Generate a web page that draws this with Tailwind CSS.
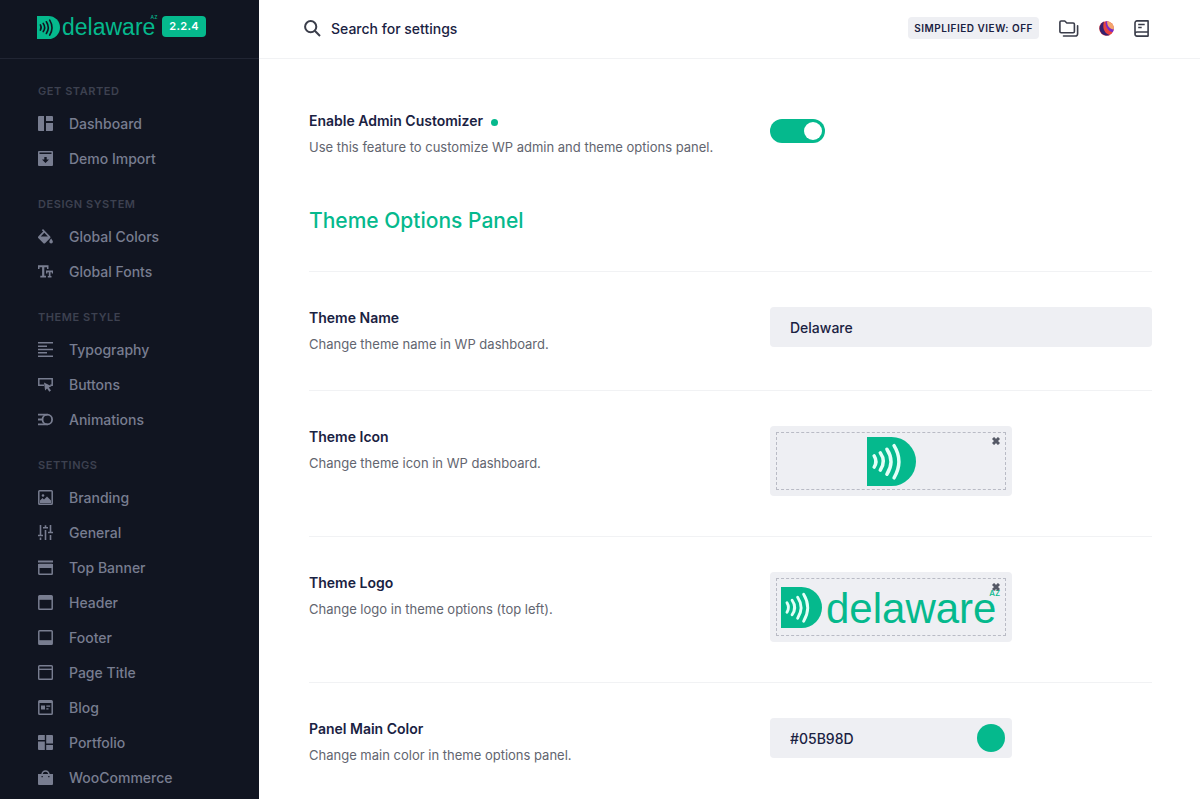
<!DOCTYPE html>
<html lang="en">
<head>
    <meta charset="UTF-8">
    <meta name="viewport" content="width=device-width, initial-scale=1.0">
    <title>Delaware - Theme Options</title>
    <script src="https://cdn.jsdelivr.net/npm/@tailwindcss/browser@4"></script>
</head>
<body class="bg-white font-['Inter',sans-serif] text-[#1a2242]">
    <svg class="hidden">
        <symbol id="mark" viewBox="0 0 48 48">
            <path fill="#05b98d" d="M0 0h24a24 24 0 0 1 0 48H0z"/>
            <g fill="none" stroke="currentColor" stroke-width="3.400" stroke-linecap="round">
                <path d="M7 18.500q3.500 5.500 0 11"/>
                <path d="M13 15.500q6 8.500 0 17"/>
                <path d="M19.500 12q8 12 0 24.500"/>
                <path d="M26.500 8.500q9.500 15.500 0 31.500"/>
            </g>
        </symbol>
    </svg>

    <div class="flex min-h-screen">
        <aside class="w-[259px] shrink-0 bg-[#111521]">
            <div class="flex h-[59px] items-start border-b border-[#212533] pl-[37px] pt-[15px]">
                <a href="#" class="relative flex items-center gap-[2px] text-[#05b98d]">
                    <svg class="size-[23px] text-[#111521]"><use href="#mark"/></svg>
                    <span class="font-['Liberation_Sans',sans-serif] text-[23px] leading-6">delaware</span>
                    <span class="absolute -right-[2px] -top-px text-[5px] font-medium leading-[6px]">AZ</span>
                </a>
                <span class="ml-[7px] mt-px rounded-[4px] bg-[#05b98d] px-[7px] text-[11px] font-semibold leading-[21px] tracking-wide text-white">2.2.4</span>
            </div>

            <nav class="pl-[38px] pt-[22px] text-[14px] font-medium text-[#787d90]">
                <h2 class="mb-[5px] text-[11px] font-semibold leading-5 tracking-wider text-[#3d4150]">GET STARTED</h2>
                <a href="#" class="flex h-[35px] items-center gap-4">
                    <svg class="size-[15px]" viewBox="0 0 15 15" fill="currentColor"><path d="M0 1a1 1 0 0 1 1-1h5v15H1a1 1 0 0 1-1-1zM8 0h6a1 1 0 0 1 1 1v4H8zM8 7h7v7a1 1 0 0 1-1 1H8z"/></svg>
                    Dashboard
                </a>
                <a href="#" class="flex h-[35px] items-center gap-4">
                    <svg class="size-[15px]" viewBox="0 0 15 15" fill="currentColor" fill-rule="evenodd"><path d="M1 0h13a1 1 0 0 1 1 1v13a1 1 0 0 1-1 1H1a1 1 0 0 1-1-1V1a1 1 0 0 1 1-1zM1.500 1.500V3h12V1.500zM6.300 6v2.500H4L7.500 12 11 8.500H8.700V6z"/></svg>
                    Demo Import
                </a>

                <h2 class="mb-[5px] mt-[18px] text-[11px] font-semibold leading-5 tracking-wider text-[#3d4150]">DESIGN SYSTEM</h2>
                <a href="#" class="flex h-[35px] items-center gap-4">
                    <svg class="size-[15px]" viewBox="0 0 15 15" fill="currentColor" fill-rule="evenodd"><path d="M5 0 3.800 1.200l1.300 1.300L.5 7.200a1.500 1.500 0 0 0 0 2.100l4.700 4.600a1.500 1.500 0 0 0 2.100 0L12 9.300a1.500 1.500 0 0 0 0-2.100zM6.300 3.800 9.900 7.500H2.700z"/><path d="M13.100 9.500s-1.800 2-1.800 3.200a1.800 1.800 0 0 0 3.600 0c0-1.200-1.800-3.200-1.800-3.200z"/></svg>
                    Global Colors
                </a>
                <a href="#" class="flex h-[35px] items-center gap-4">
                    <svg class="size-[15px]" viewBox="0 0 15 15" fill="currentColor"><path d="M0 1.200h10.500V5H9V3.200H6.300v8.600H8v1.600H2.300v-1.600h1.800V3.200H1.500V5H0zM8 6.500h7v3h-1.200V8.200h-1.300v3.900h1v1.300H9.800v-1.300h1V8.200H9.400v1.300H8z"/></svg>
                    Global Fonts
                </a>

                <h2 class="mb-[5px] mt-[18px] text-[11px] font-semibold leading-5 tracking-wider text-[#3d4150]">THEME STYLE</h2>
                <a href="#" class="flex h-[35px] items-center gap-4">
                    <svg class="size-[15px]" viewBox="0 0 15 15" fill="currentColor"><path d="M0 0h15v1.500H0zM0 3.400h9v1.500H0zM0 6.800h15v1.500H0zM0 10.100h9v1.500H0zM0 13.500h15V15H0z"/></svg>
                    Typography
                </a>
                <a href="#" class="flex h-[35px] items-center gap-4">
                    <svg class="size-[15px]" viewBox="0 0 15 15"><path fill="none" stroke="currentColor" stroke-width="1.500" d="M6 8.200H.8V1.800h13.400v6.400h-2"/><path fill="currentColor" d="m6 5.500 7.500 3.700-2.700 1.200 2.200 3-1.700 1.300-2.200-3.100-2 2z"/></svg>
                    Buttons
                </a>
                <a href="#" class="flex h-[35px] items-center gap-4">
                    <svg class="size-[15px]" viewBox="0 0 15 15" fill="none" stroke="currentColor" stroke-width="1.800"><circle cx="9.300" cy="7.500" r="4.800"/><path d="M0 2.700h9.500M0 7.500h4.800M0 12.300h9.500"/></svg>
                    Animations
                </a>

                <h2 class="mb-[5px] mt-[18px] text-[11px] font-semibold leading-5 tracking-wider text-[#3d4150]">SETTINGS</h2>
                <a href="#" class="flex h-[35px] items-center gap-4">
                    <svg class="size-[15px]" viewBox="0 0 15 15"><rect x=".8" y=".8" width="13.400" height="13.400" rx=".8" fill="none" stroke="currentColor" stroke-width="1.500"/><circle cx="5" cy="5.500" r="1.300" fill="currentColor"/><path fill="currentColor" d="M2 13v-2.500L4.500 8 6 9.500 9 6.500l4 4V13z"/></svg>
                    Branding
                </a>
                <a href="#" class="flex h-[35px] items-center gap-4">
                    <svg class="size-[15px]" viewBox="0 0 15 15" fill="none" stroke="currentColor" stroke-width="1.600"><path d="M2.500 0v10.500M0 10.500h5M2.500 12.500V15M7.500 5v10M5 2.800h5M7.500.3v2.500M12.500 0v7.200M10 7.500h5M12.500 10v5"/></svg>
                    General
                </a>
                <a href="#" class="flex h-[35px] items-center gap-4">
                    <svg class="size-[15px]" viewBox="0 0 15 15"><path fill="currentColor" d="M0 .5h15v2H0zM0 4h15v4H0z"/><rect x=".8" y="4.500" width="13.400" height="9.700" rx=".5" fill="none" stroke="currentColor" stroke-width="1.500"/></svg>
                    Top Banner
                </a>
                <a href="#" class="flex h-[35px] items-center gap-4">
                    <svg class="size-[15px]" viewBox="0 0 15 15"><rect x=".8" y=".8" width="13.400" height="13.400" rx=".8" fill="none" stroke="currentColor" stroke-width="1.500"/><path fill="currentColor" d="M1 1h13v3.800H1z"/></svg>
                    Header
                </a>
                <a href="#" class="flex h-[35px] items-center gap-4">
                    <svg class="size-[15px]" viewBox="0 0 15 15"><rect x=".8" y=".8" width="13.400" height="13.400" rx=".8" fill="none" stroke="currentColor" stroke-width="1.500"/><path fill="currentColor" d="M1 10.200h13V14H1z"/></svg>
                    Footer
                </a>
                <a href="#" class="flex h-[35px] items-center gap-4">
                    <svg class="size-[15px]" viewBox="0 0 15 15" fill="none" stroke="currentColor" stroke-width="1.400"><rect x=".7" y=".7" width="13.600" height="13.600" rx=".8"/><path d="M1 4.300h13"/></svg>
                    Page Title
                </a>
                <a href="#" class="flex h-[35px] items-center gap-4">
                    <svg class="size-[15px]" viewBox="0 0 15 15"><rect x=".8" y=".8" width="13.400" height="13.400" rx=".8" fill="none" stroke="currentColor" stroke-width="1.500"/><path fill="currentColor" d="M1 1h13v2H1zM3 5.500h4v4H3zM8.300 5.500h3.900v1.300H8.300zM8.300 8.200h2.200v1.300H8.300z"/></svg>
                    Blog
                </a>
                <a href="#" class="flex h-[35px] items-center gap-4">
                    <svg class="size-[15px]" viewBox="0 0 15 15" fill="currentColor"><path d="M1 0h5.800v5H0V1a1 1 0 0 1 1-1zM8.200 0H14a1 1 0 0 1 1 1v7.500H8.200zM0 6.500h6.800V15H1a1 1 0 0 1-1-1zM8.200 10H15v4a1 1 0 0 1-1 1H8.200z"/></svg>
                    Portfolio
                </a>
                <a href="#" class="flex h-[35px] items-center gap-4">
                    <svg class="size-[15px]" viewBox="0 0 15 15" fill="currentColor" fill-rule="evenodd"><path d="M0 4h15v10a1 1 0 0 1-1 1H1a1 1 0 0 1-1-1zM3.500 6v1.300h1.300V6zM10.200 6v1.300h1.300V6z"/><path fill="none" stroke="currentColor" stroke-width="1.500" d="M4 4.500a3.500 3.500 0 0 1 7 0"/></svg>
                    WooCommerce
                </a>
            </nav>
        </aside>

        <div class="min-w-0 flex-1">
            <header class="flex h-[59px] items-center border-b border-[#f1f2f4] pb-[2px] pl-[45px] pr-[51px] text-[#3a3d4a]">
                <label for="search" class="mr-[10px]">
                    <svg class="size-[17px]" viewBox="0 0 17 17" fill="none" stroke="currentColor" stroke-width="2"><circle cx="6.700" cy="6.700" r="5.600"/><path d="m10.800 10.800 5.200 5.200"/></svg>
                </label>
                <input id="search" type="text" placeholder="Search for settings" aria-label="Search for settings" class="min-w-0 flex-1 text-[14px] font-medium outline-none placeholder:text-[#1a2242]">
                <button class="mr-5 h-[22px] rounded-[4px] bg-[#eeeff3] px-[6px] text-[10px] font-semibold tracking-wider text-[#1a2242]">SIMPLIFIED VIEW: OFF</button>
                <a href="#" aria-label="Files" class="mr-5"><svg class="h-[17px] w-5" viewBox="0 0 20 17" fill="none" stroke="currentColor" stroke-width="1.600" stroke-linejoin="round" stroke-linecap="round"><path d="M.9 2.200Q.9 1 2.100 1h3.700l2 2h6.400q1.200 0 1.200 1.200v7.300q0 1.200-1.200 1.200H2.100Q.9 12.700.9 11.500z"/><path d="M4.500 16h11.800q2.300 0 2.300-2.300V5.800"/></svg></a>
                <a href="#" aria-label="Colors" class="mr-5"><svg class="size-[15px]" viewBox="0 0 15 15"><circle cx="7.500" cy="7.500" r="7.300" fill="#e8443f"/><path fill="#35206f" d="M5 .6a7.300 7.300 0 1 0 5.800 13.400C5.500 12.500 3 7 5 .6z"/><path fill="#7a2bc8" d="M6.700.2C6 5 9 10.500 13.800 11.300A7.300 7.300 0 0 0 14.800 7C11.500 6.500 9.500 4 9.200.4z"/><path fill="#f3a56c" d="M8 .2c0 4.800 2.800 8 6.800 8.300A7.300 7.300 0 0 0 8 .2z"/></svg></a>
                <a href="#" aria-label="Documentation"><svg class="h-[17px] w-[15px]" viewBox="0 0 15 17" fill="none" stroke="currentColor" stroke-width="1.600" stroke-linejoin="round"><path d="M3 .9h11.100v15.200H3a2 2 0 0 1-2-2V2.900a2 2 0 0 1 2-2zM1 14a2 2 0 0 1 2-2h11M4.200 4.500h6.500M4.200 7.500h3.500"/></svg></a>
            </header>

            <main class="pl-[50px] pr-12 pt-[51px]">
                <div class="grid grid-cols-[461fr_382fr]">
                    <div>
                        <label for="customizer" class="flex items-center text-[14px] font-semibold leading-[22px]">Enable Admin Customizer <span class="ml-2 mt-[2px] size-[7px] rounded-full bg-[#05b98d]"></span></label>
                        <p class="mt-[5px] text-[13px] leading-5 text-[#62656f]">Use this feature to customize WP admin and theme options panel.</p>
                    </div>
                    <div class="flex pt-[9px]">
                        <input id="customizer" type="checkbox" checked class="h-6 w-[55px] appearance-none rounded-full bg-gray-300 p-[3px] before:block before:size-[18px] before:rounded-full before:bg-white checked:bg-[#05b98d] checked:before:ml-auto">
                    </div>
                </div>

                <h1 class="mb-[35px] mt-[49px] text-[21px] font-medium leading-[30px] text-[#05b98d]">Theme Options Panel</h1>

                <div class="grid grid-cols-[461fr_382fr] border-t border-[#f1f2f4] pb-9 pt-[35px]">
                    <div>
                        <label for="name" class="block text-[14px] font-semibold leading-[22px]">Theme Name</label>
                        <p class="mt-[5px] text-[13px] leading-5 text-[#62656f]">Change theme name in WP dashboard.</p>
                    </div>
                    <input id="name" type="text" value="Delaware" class="h-10 w-full rounded-[4px] bg-[#eeeff3] px-5 text-[14px] font-medium outline-none">
                </div>

                <div class="grid grid-cols-[461fr_382fr] border-t border-[#f1f2f4] pb-10 pt-[35px]">
                    <div>
                        <h3 class="text-[14px] font-semibold leading-[22px]">Theme Icon</h3>
                        <p class="mt-[5px] text-[13px] leading-5 text-[#62656f]">Change theme icon in WP dashboard.</p>
                    </div>
                    <div class="h-[70px] w-[242px] rounded-[4px] bg-[#eeeff3] p-[6px]">
                        <div class="relative flex h-full items-center justify-center border border-dashed border-[#b9bbc5]">
                            <svg class="size-[49px] text-[#e4fff8]"><use href="#mark"/></svg>
                            <button aria-label="Remove icon" class="absolute right-[5px] top-[4px] text-[#555966]"><svg class="size-2" viewBox="0 0 8 8" stroke="currentColor" stroke-width="3"><path d="m1 1 6 6M7 1 1 7"/></svg></button>
                        </div>
                    </div>
                </div>

                <div class="grid grid-cols-[461fr_382fr] border-t border-[#f1f2f4] pb-10 pt-[35px]">
                    <div>
                        <h3 class="text-[14px] font-semibold leading-[22px]">Theme Logo</h3>
                        <p class="mt-[5px] text-[13px] leading-5 text-[#62656f]">Change logo in theme options (top left).</p>
                    </div>
                    <div class="h-[70px] w-[242px] rounded-[4px] bg-[#eeeff3] p-[6px]">
                        <div class="relative flex h-full items-center gap-1 border border-dashed border-[#b9bbc5] pl-1 text-[#05b98d]">
                            <svg class="size-[41px] shrink-0 text-[#e4fff8]"><use href="#mark"/></svg>
                            <span class="pt-1 font-['Liberation_Sans',sans-serif] text-[42px] leading-10">delaware</span>
                            <span class="absolute right-[5px] top-[9px] text-[8px] font-medium leading-[10px]">AZ</span>
                            <button aria-label="Remove logo" class="absolute right-[5px] top-[4px] text-[#555966]"><svg class="size-2" viewBox="0 0 8 8" stroke="currentColor" stroke-width="3"><path d="m1 1 6 6M7 1 1 7"/></svg></button>
                        </div>
                    </div>
                </div>

                <div class="grid grid-cols-[461fr_382fr] border-t border-[#f1f2f4] pt-[35px]">
                    <div>
                        <label for="color" class="block text-[14px] font-semibold leading-[22px]">Panel Main Color</label>
                        <p class="mt-[5px] text-[13px] leading-5 text-[#62656f]">Change main color in theme options panel.</p>
                    </div>
                    <div class="flex h-10 w-[242px] items-center rounded-[4px] bg-[#eeeff3] pl-5 pr-[7px]">
                        <input id="color" type="text" value="#05B98D" class="min-w-0 flex-1 text-[14px] font-medium outline-none">
                        <button aria-label="Pick color" class="size-7 rounded-full bg-[#05b98d]"></button>
                    </div>
                </div>
            </main>
        </div>
    </div>
</body>
</html>
